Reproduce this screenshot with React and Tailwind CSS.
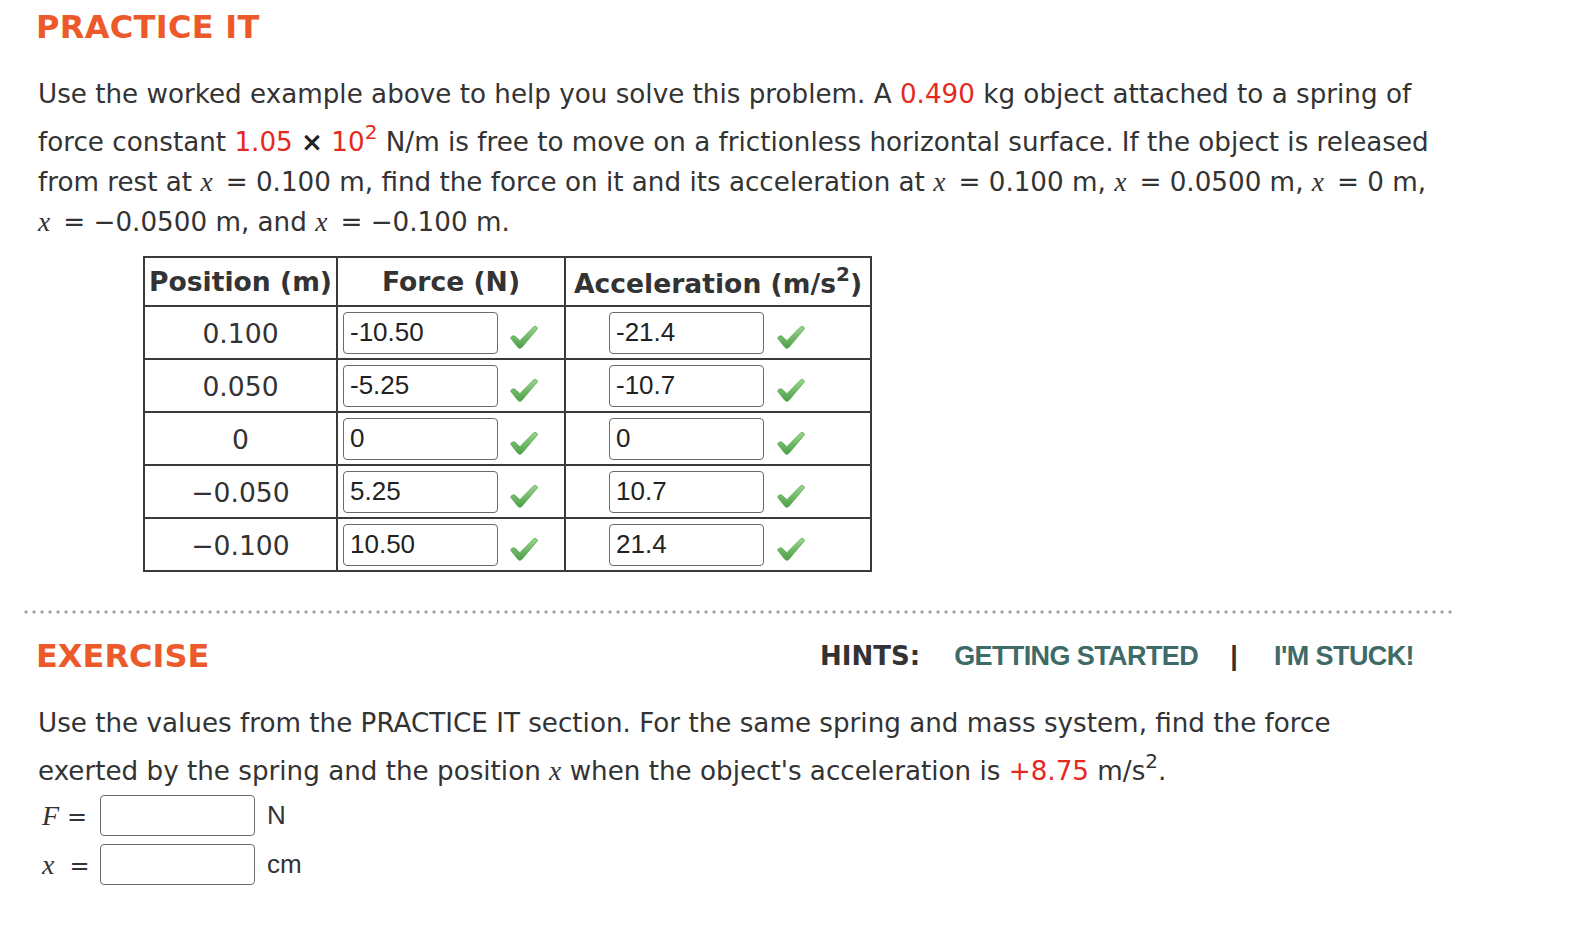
import React from 'react';

const verdana = { fontFamily: '"DejaVu Sans", Verdana, sans-serif' };

const Check = () => (
    <svg width="31" height="27" viewBox="0 0 30 26" className="block">
        <defs>
            <linearGradient id="chk" x1="0" y1="0" x2="0" y2="1">
                <stop offset="0" stopColor="#9ad78d" />
                <stop offset="1" stopColor="#4a9e45" />
            </linearGradient>
        </defs>
        <path
            d="M2.5 14.5 Q4 11.5 6.5 12.5 L11.5 17 L25 3.5 Q28 2.5 28.5 5.5 L13.5 23.5 Q11.5 25.5 9.5 23.5 Z"
            fill="url(#chk)"
            stroke="#5aa653"
            strokeWidth="0.8"
            strokeLinejoin="round"
        />
    </svg>
);

const X = () => (
    <span className="italic text-[27.5px] font-['Liberation_Serif',serif]">x</span>
);

// "x =" with the wider spacing the original math markup has
const XEq = () => (
    <>
        <X />
        <span className="ml-[13px]">=</span>
    </>
);

const Red = ({ children }) => <span className="text-[#e5291f]">{children}</span>;

const Sup = ({ children }) => (
    <span className="text-[20px] align-[12px] leading-none">{children}</span>
);

const Box = ({ value }) => (
    <div className="w-[155px] h-[42px] border border-[#6b6b6b] rounded-[4px] px-[6px] flex items-center text-[26px] text-[#222] font-['Liberation_Sans',Arial,sans-serif] bg-white">
        {value}
    </div>
);

const rows = [
    { pos: '0.100', f: '-10.50', a: '-21.4' },
    { pos: '0.050', f: '-5.25', a: '-10.7' },
    { pos: '0', f: '0', a: '0' },
    { pos: '\u22120.050', f: '5.25', a: '10.7' },
    { pos: '\u22120.100', f: '10.50', a: '21.4' },
];

export default function App() {
    return (
        <div className="bg-white w-[1586px] h-[932px] text-[#333]" style={verdana}>
            <div className="pl-[36px] pt-[8px]">
                <h1 className="text-[32px] font-bold text-[#ec5a2b] leading-[38px] tracking-[0.3px]">PRACTICE IT</h1>
            </div>

            <div className="pl-[38px] pr-[100px] mt-[28px] text-[26.2px] leading-[40px]">
                <p>Use the worked example above to help you solve this problem. A <Red>0.490</Red> kg object attached to a spring of</p>
                <p className="mt-[8px]">force constant <Red>1.05</Red> <span className="font-bold text-[#222]">×</span> <Red>10<Sup>2</Sup></Red> N/m is free to move on a frictionless horizontal surface. If the object is released</p>
                <p>from rest at <XEq /> 0.100 m, find the force on it and its acceleration at <XEq /> 0.100 m, <XEq /> 0.0500 m, <XEq /> 0 m,</p>
                <p><XEq /> −0.0500 m, and <XEq /> −0.100 m.</p>
            </div>

            <div className="pl-[143px] mt-[14px]">
                <table className="table-fixed w-[727px] border-collapse border-2 border-[#3a3a3a]">
                    <colgroup>
                        <col className="w-[193px]" />
                        <col className="w-[228px]" />
                        <col className="w-[306px]" />
                    </colgroup>
                    <thead>
                        <tr className="h-[49px]">
                            <th className="border-2 border-[#3a3a3a] text-[26.6px] font-bold text-[#333] whitespace-nowrap">Position (m)</th>
                            <th className="border-2 border-[#3a3a3a] text-[26.6px] font-bold text-[#333] whitespace-nowrap">Force (N)</th>
                            <th className="border-2 border-[#3a3a3a] text-[26.6px] font-bold text-[#333] whitespace-nowrap pt-[4px]">Acceleration (m/s<Sup>2</Sup>)</th>
                        </tr>
                    </thead>
                    <tbody>
                        {rows.map((r) => (
                            <tr key={r.pos} className="h-[53px]">
                                <td className="border-2 border-[#3a3a3a] text-center text-[26.6px] pt-[2px]">{r.pos}</td>
                                <td className="border-2 border-[#3a3a3a] pl-[5px]">
                                    <div className="flex items-center gap-[10px]">
                                        <Box value={r.f} />
                                        <span className="mt-[8px]"><Check /></span>
                                    </div>
                                </td>
                                <td className="border-2 border-[#3a3a3a] pl-[43px]">
                                    <div className="flex items-center gap-[11px]">
                                        <Box value={r.a} />
                                        <span className="mt-[8px]"><Check /></span>
                                    </div>
                                </td>
                            </tr>
                        ))}
                    </tbody>
                </table>
            </div>

            <div className="ml-[22px] w-[1432px] mt-[38px] h-[4px] bg-[radial-gradient(circle,#9a9a9a_1.3px,transparent_1.8px)] bg-[length:8px_4px]" />

            <div className="flex items-center justify-between pl-[36px] w-[1414px] mt-[22px]">
                <h2 className="text-[32px] font-bold text-[#ec5a2b] leading-[40px]">EXERCISE</h2>
                <div className="flex items-center font-['Liberation_Sans',Arial,sans-serif] font-bold text-[27px] tracking-[-0.6px]">
                    <span className="text-[#333] tracking-[0px] text-[26px]" style={verdana}>HINTS:</span>
                    <span className="ml-[34px] text-[#3e6a68]">GETTING STARTED</span>
                    <span className="ml-[32px] text-[#333]">|</span>
                    <span className="ml-[37px] text-[#3e6a68]">I'M STUCK!</span>
                </div>
            </div>

            <div className="pl-[38px] mt-[26px] text-[26.2px] leading-[40px]">
                <p>Use the values from the PRACTICE IT section. For the same spring and mass system, find the force</p>
                <p className="mt-[8px]">exerted by the spring and the position <X /> when the object's acceleration is <Red>+8.75</Red> m/s<Sup>2</Sup>.</p>
            </div>

            <div className="pl-[42px] mt-[4px] flex flex-col gap-[7px]">
                <div className="flex items-center">
                    <span className="w-[58px] flex items-baseline">
                        <i className="text-[28px] font-['Liberation_Serif',serif]">F</i>
                        <span className="ml-[8px] text-[24px]">=</span>
                    </span>
                    <div className="w-[155px] h-[41px] border border-[#6b6b6b] rounded-[4px]" />
                    <span className="ml-[12px] text-[26px] font-['Liberation_Sans',Arial,sans-serif]">N</span>
                </div>
                <div className="flex items-center">
                    <span className="w-[58px] flex items-baseline">
                        <i className="text-[28px] font-['Liberation_Serif',serif]">x</i>
                        <span className="ml-[15px] text-[24px]">=</span>
                    </span>
                    <div className="w-[155px] h-[41px] border border-[#6b6b6b] rounded-[4px]" />
                    <span className="ml-[12px] text-[26px] font-['Liberation_Sans',Arial,sans-serif]">cm</span>
                </div>
            </div>
        </div>
    );
}
